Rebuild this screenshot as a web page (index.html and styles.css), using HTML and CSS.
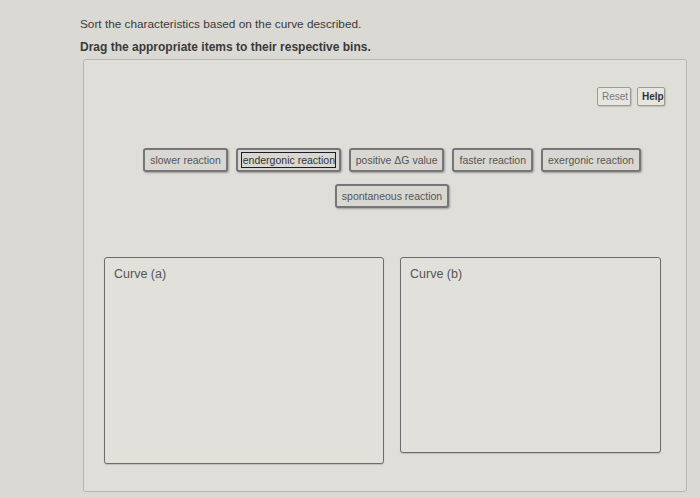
FILE: index.html
```html
<!DOCTYPE html>
<html>
<head>
<meta charset="utf-8">
<link rel="stylesheet" href="styles.css">
</head>
<body>
<div class="page">
  <p class="intro">Sort the characteristics based on the curve described.</p>
  <p class="instr">Drag the appropriate items to their respective bins.</p>
  <div class="panel">
    <div class="toolbar">
      <button class="btn reset">Reset</button>
      <button class="btn help">Help</button>
    </div>
    <div class="chips">
      <div class="chip">slower reaction</div>
      <div class="chip focus"><span class="focus-ring">endergonic reaction</span></div>
      <div class="chip">positive &Delta;G value</div>
      <div class="chip">faster reaction</div>
      <div class="chip">exergonic reaction</div>
      <div class="chip">spontaneous reaction</div>
    </div>
    <div class="bins">
      <div class="bin bin-a"><span class="bin-label">Curve (a)</span></div>
      <div class="bin bin-b"><span class="bin-label">Curve (b)</span></div>
    </div>
  </div>
</div>
</body>
</html>
```
FILE: styles.css
```css
html, body {
  margin: 0;
  padding: 0;
}
body {
  width: 700px;
  height: 498px;
  overflow: hidden;
  background: #dad9d4;
  font-family: "Liberation Sans", Arial, sans-serif;
}
.page {
  padding: 17px 0 0 80px;
}
.intro {
  margin: 0;
  font-size: 11.8px;
  color: #3a3a3a;
  line-height: 14px;
}
.instr {
  margin: 9px 0 0 0;
  font-size: 12px;
  font-weight: bold;
  color: #3a3a3a;
  line-height: 14px;
}
.panel {
  margin: 5px 0 0 3px;
  width: 604px;
  height: 433px;
  box-sizing: border-box;
  border: 1px solid #b6b5b0;
  border-radius: 3px;
  background: #dfded9;
  padding: 27px 21px 0 20px;
}
.toolbar {
  display: flex;
  justify-content: flex-end;
  gap: 6px;
}
.btn {
  font-family: "Liberation Sans", Arial, sans-serif;
  font-size: 10px;
  height: 19px;
  padding: 0 4px;
  border: 1px solid #9c9b97;
  border-radius: 2px;
  background: #e6e5e0;
  box-shadow: 1px 1px 1px rgba(0,0,0,0.15);
}
.reset {
  color: #7a7a7a;
  width: 34px;
}
.help {
  color: #333;
  font-weight: bold;
  width: 28px;
}
.chips {
  margin: 42px 0 0 28px;
  width: 520px;
  display: flex;
  flex-wrap: wrap;
  justify-content: center;
  column-gap: 8px;
  row-gap: 12px;
}
.chip {
  height: 24px;
  box-sizing: border-box;
  padding: 0 5px;
  display: flex;
  align-items: center;
  font-size: 10.5px;
  color: #555;
  background: #d8d7d2;
  border: 2px solid #76767a;
  border-radius: 3px;
  box-shadow: 1px 1px 2px rgba(0,0,0,0.3);
  white-space: nowrap;
}
.chip.focus {
  padding: 0 3px;
}
.focus-ring {
  display: block;
  border: 1.5px solid #1e1e1e;
  padding: 1px 0 1px 1px;
  color: #333;
  width: 92px;
  overflow: hidden;
  line-height: 12px;
}
.bins {
  margin-top: 49px;
  display: flex;
  align-items: flex-start;
  gap: 16px;
}
.bin {
  box-sizing: border-box;
  border: 1.5px solid #6c6c6c;
  border-radius: 3px;
  background: #e1e0db;
  padding: 6px 9px;
  box-shadow: 0 1px 1px rgba(0,0,0,0.15);
}
.bin-a {
  width: 280px;
  height: 207px;
}
.bin-b {
  width: 261px;
  height: 196px;
}
.bin-label {
  font-size: 12.5px;
  color: #555;
}
```
